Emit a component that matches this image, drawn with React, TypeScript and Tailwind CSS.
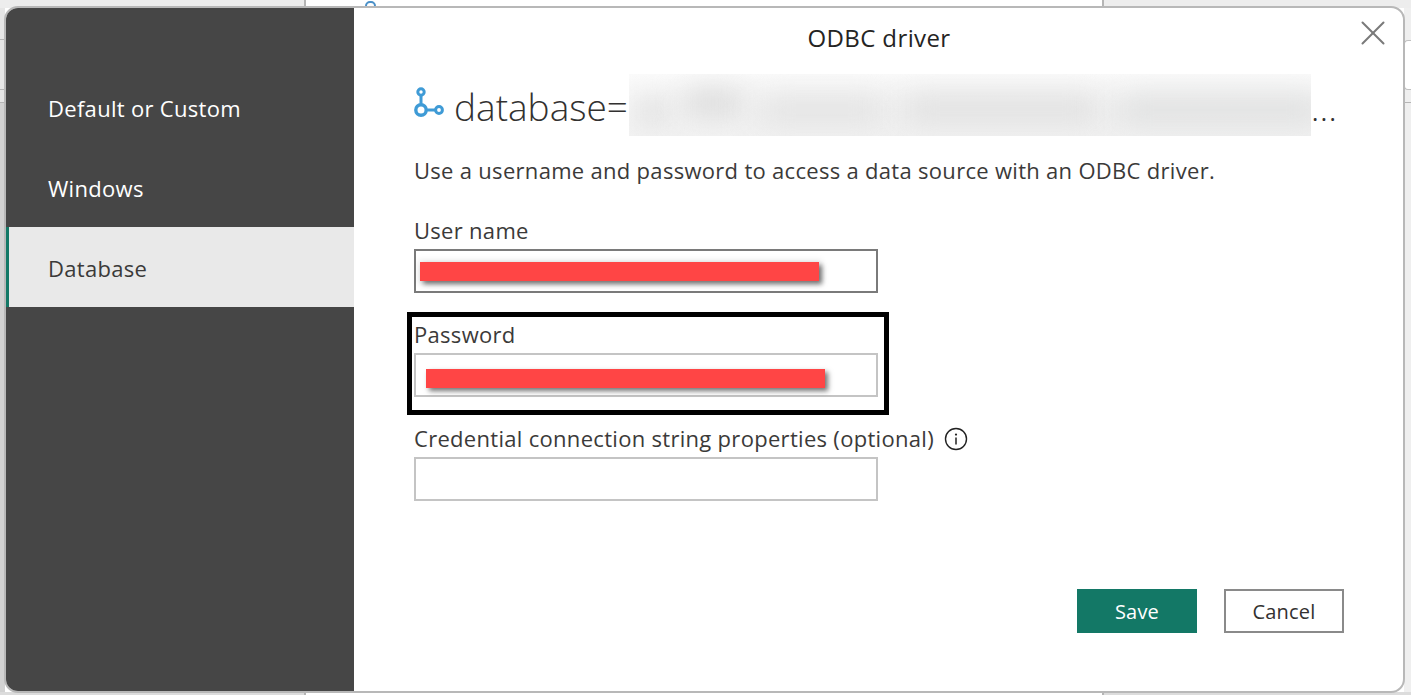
import React from "react";
import { X } from "lucide-react";

const font = "font-['Open_Sans','Noto_Sans',sans-serif]";
const labelText = "text-[22px] tracking-[0.3px]";

const Field: React.FC<{
  label: string;
  className?: string;
  info?: boolean;
  children?: React.ReactNode;
}> = ({ label, className, info, children }) => (
  <div className="mb-[25px] w-[464px]">
    <div className={`flex h-[35px] items-center gap-[10px] whitespace-nowrap pb-[3px] text-[#3b3a39] ${labelText}`}>
      {label}
      {info && (
        <svg width="24" height="24" viewBox="0 0 24 24" fill="none" className="mt-[2px] shrink-0">
          <circle cx="12" cy="12" r="10.5" stroke="#222" strokeWidth="1.4" />
          <circle cx="12" cy="7.6" r="1.1" fill="#222" />
          <path d="M12 10.6v7" stroke="#222" strokeWidth="1.5" />
        </svg>
      )}
    </div>
    <div className={`flex h-[44px] items-center border-2 ${className}`}>{children}</div>
  </div>
);

const RedBar: React.FC<{ smudge?: boolean }> = ({ smudge }) => (
  <div
    className={`h-[19px] w-[399px] bg-[#ff4545] ${
      smudge
        ? "shadow-[3px_3px_5px_rgba(0,0,0,0.55),0_0_6px_3px_rgba(0,0,0,0.06)]"
        : "shadow-[3px_3px_5px_rgba(0,0,0,0.55)]"
    }`}
  />
);

// the blurred-out connection string next to the title
const BlurredText: React.FC = () => (
  <div className="flex h-[62px] w-[682px] shrink-0 items-center gap-[14px] overflow-hidden bg-linear-to-b from-[#fbfbfb] to-[#f3f3f3] pl-[6px]">
    <div className="mt-[12px] h-[28px] w-[34px] shrink-0 bg-[#dfdfdf] blur-[14px]" />
    <div className="mt-[-4px] h-[30px] w-[60px] shrink-0 bg-[#dcdcdc] blur-[14px]" />
    <div className="mt-[10px] h-[28px] w-[130px] shrink-0 bg-[#dfdfdf] blur-[16px]" />
    <div className="mt-[8px] h-[28px] w-[200px] shrink-0 bg-[#dcdcdc] blur-[16px]" />
    <div className="mt-[10px] h-[30px] w-[210px] shrink-0 bg-[#dcdddd] blur-[16px]" />
  </div>
);

// bits of the app window left visible around the dialog
const Backdrop: React.FC = () => (
  <div className="absolute inset-0 flex flex-col justify-between">
    <div className="flex h-[8px] bg-[#ededed]">
      <div className="w-[304px]" />
      <div className="flex w-[800px] justify-start border-x-2 border-[#b5b5b5] bg-white pl-[59px]">
        <div className="mt-[1px] h-[10px] w-[11px] rounded-full border-2 border-[#4a90c8]" />
      </div>
    </div>
    <div className="flex flex-1 justify-between">
      <div className="flex w-[5px] flex-col bg-[#e6e6e6]">
        <div className="mt-[31px] h-[51px] border-y border-[#b5b5b5]" />
        <div className="h-[13px] border-b border-[#b5b5b5]" />
        <div className="flex-1 bg-[#d2d2d2]" />
      </div>
      <div className="flex w-[7px] flex-col bg-[#efefef]">
        <div className="mt-[32px] h-[50px] rounded-l border border-r-0 border-[#c0c0c0] bg-white" />
        <div className="h-[13px] border-b border-[#b5b5b5]" />
      </div>
    </div>
    <div className="flex h-[3px] bg-[#dcdcdc]">
      <div className="w-[304px]" />
      <div className="w-[800px] border-x-2 border-[#b5b5b5] bg-white" />
    </div>
  </div>
);

const App: React.FC = () => {
  return (
    <div className={`relative h-[695px] w-[1411px] overflow-hidden pl-[4px] pt-[6px] ${font}`}>
      <Backdrop />

      <div className="relative flex h-[687px] w-[1401px] overflow-hidden rounded-[14px] border-2 border-[#b8b8b8] bg-white">
        <aside className={`w-[348px] shrink-0 bg-[#464646] pt-[59px] text-white ${labelText}`}>
          <div className="flex h-[80px] items-center pl-[42px] pt-[3px]">Default or Custom</div>
          <div className="flex h-[80px] items-center pl-[42px] pt-[3px]">Windows</div>
          <div className="flex h-[80px] items-center border-l-[3px] border-[#137866] bg-[#e9e9e9] pl-[39px] pt-[3px] text-[#3b3a39]">
            Database
          </div>
        </aside>

        <main className="relative flex min-w-0 flex-1 flex-col pb-[58px] pl-[60px] pr-[59px]">
          <div className="flex h-[59px] shrink-0 items-center justify-center text-[24px] tracking-[0.4px] text-[#252423]">
            ODBC driver
          </div>
          <button className="absolute right-[9px] top-[4px] text-[#7a7a7a]">
            <X size={42} strokeWidth={1.15} />
          </button>

          <div className="mt-[7px] flex h-[62px] items-center">
            <svg width="32" height="32" viewBox="0 0 32 32" fill="none" className="mb-[6px] ml-[-1px] shrink-0">
              <circle cx="8" cy="6" r="3.2" stroke="#3f9bd6" strokeWidth="3" />
              <circle cx="8" cy="24" r="5.2" stroke="#3f9bd6" strokeWidth="3.4" />
              <circle cx="26" cy="24" r="3.4" stroke="#3f9bd6" strokeWidth="3" />
              <path d="M8 9.5v9M13.5 24H22.5" stroke="#3f9bd6" strokeWidth="3" />
            </svg>
            <span className="ml-[9px] mr-[1px] whitespace-nowrap pt-[3px] text-[37px] font-light text-[#323130]">
              database=
            </span>
            <BlurredText />
            <span className="ml-[1px] mt-[14px] text-[24px] tracking-[2.5px] text-[#323130]">...</span>
          </div>

          <p className={`mt-[18px] h-[32px] whitespace-nowrap leading-[32px] text-[#3b3a39] ${labelText}`}>
            Use a username and password to access a data source with an ODBC driver.
          </p>

          <div className="mt-[28px]">
            <Field label="User name" className="border-[#7a7a7a] pl-[4px]">
              <RedBar smudge />
            </Field>
            <Field label="Password" className="border-[#c4c4c4] pl-[10px] pt-[6px]">
              <RedBar />
            </Field>
            <Field label="Credential connection string properties (optional)" info className="border-[#c4c4c4]" />
          </div>

          <div className="mt-auto flex justify-end gap-[27px] text-[20px] tracking-[0.2px]">
            <button className="h-[44px] w-[120px] bg-[#137866] pt-[2px] text-white">Save</button>
            <button className="h-[44px] w-[120px] border-2 border-[#8a8a8a] pt-[2px] text-[#323130]">Cancel</button>
          </div>

          {/* annotation drawn over the password field */}
          <div className="pointer-events-none absolute left-[53px] top-[304px] h-[103px] w-[482px] border-[5px] border-black" />
        </main>
      </div>
    </div>
  );
};

export default App;
